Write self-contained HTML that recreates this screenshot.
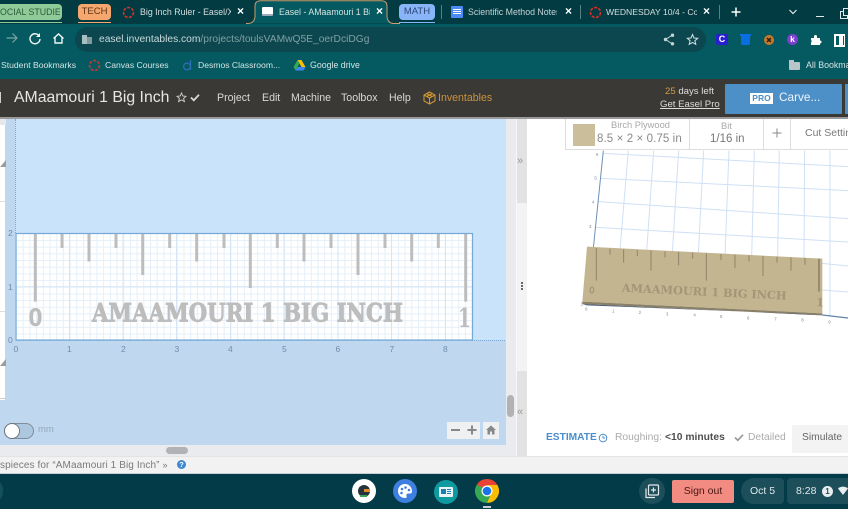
<!DOCTYPE html>
<html><head><meta charset="utf-8">
<style>
html,body{margin:0;padding:0;width:848px;height:509px;overflow:hidden;background:#fff;font-family:"Liberation Sans",sans-serif}
.a{position:absolute;white-space:nowrap}
#root{position:relative;width:848px;height:509px;overflow:hidden}
</style></head><body><div id="root">

<!-- tab strip -->
<div class="a" style="left:0;top:0;width:848px;height:24px;background:#033b42"></div>
<div class="a" style="left:0;top:24px;width:848px;height:55px;background:#045a60"></div>
<div class="a" style="left:-10px;top:4px;width:72px;height:16px;border-radius:4px;background:#8fcb98"></div>
<div class="a" style="left:0;top:22px;width:62px;height:1px;background:#8fcb98"></div>
<div class="a" style="left:0;top:5px;width:60px;font-size:8.8px;line-height:14px;color:#2c5a3a;overflow:hidden">OCIAL STUDIES</div>
<div class="a" style="left:78px;top:4px;width:33px;height:16px;border-radius:4px;background:#f5a76e;color:#5c3418;font-size:9.5px;line-height:15px;text-align:center">TECH</div>
<div class="a" style="left:78px;top:22px;width:33px;height:1px;background:#f5a76e"></div>
<svg class="a" style="left:122px;top:6px" width="13" height="13"><circle cx="6.5" cy="6.5" r="5" fill="none" stroke="#d8312b" stroke-width="1.6" stroke-dasharray="3 1.4"/></svg>
<div class="a" style="left:140px;top:5px;width:91px;overflow:hidden;font-size:8.8px;line-height:14px;color:#d5dfe0">Big Inch Ruler - Easel/X</div>
<div class="a" style="left:237px;top:4px;font-size:12px;line-height:15px;color:#fff;font-weight:bold">×</div>

<svg class="a" style="left:246px;top:0" width="154" height="24"><path d="M0 23.5 H2 Q8 23.5 9 17 V6 Q9 .7 15 .7 H135 Q141 .7 141 6 V17 Q142 23.5 148 23.5 H154" fill="#045a60" stroke="#c79c6e" stroke-width="1"/></svg>
<div class="a" style="left:262px;top:7px;width:11px;height:7px;background:#fff;border-radius:1px;border-bottom:2px solid #9ab"></div>
<div class="a" style="left:279px;top:5px;width:91px;overflow:hidden;font-size:8.8px;line-height:14px;color:#d5e2e3">Easel - AMaamouri 1 Big</div>
<div class="a" style="left:376px;top:4px;font-size:12px;line-height:15px;color:#fff;font-weight:bold">×</div>

<div class="a" style="left:399px;top:4px;width:36px;height:16px;border-radius:4px;background:#8ab4f8;color:#2d4778;font-size:9.5px;line-height:15px;text-align:center">MATH</div>
<div class="a" style="left:399px;top:22px;width:36px;height:1px;background:#8ab4f8"></div>
<div class="a" style="left:441px;top:5px;width:1px;height:14px;background:#5b7f84"></div>
<div class="a" style="left:451px;top:6px;width:12px;height:12px;background:#4c8bf5;border-radius:1px"></div>
<div class="a" style="left:453px;top:9px;width:8px;height:1px;background:#fff;box-shadow:0 2px 0 #fff,0 4px 0 #fff"></div>
<div class="a" style="left:468px;top:5px;width:89px;overflow:hidden;font-size:8.8px;line-height:14px;color:#c5d4d6">Scientific Method Notes</div>
<div class="a" style="left:565px;top:4px;font-size:12px;line-height:15px;color:#fff;font-weight:bold">×</div>
<div class="a" style="left:580px;top:5px;width:1px;height:14px;background:#5b7f84"></div>
<svg class="a" style="left:589px;top:6px" width="13" height="13"><circle cx="6.5" cy="6.5" r="5" fill="none" stroke="#d8312b" stroke-width="1.6" stroke-dasharray="3 1.4"/></svg>
<div class="a" style="left:606px;top:5px;width:91px;overflow:hidden;font-size:8.6px;line-height:14px;color:#d5dfe0">WEDNESDAY 10/4 - Cod</div>
<div class="a" style="left:703px;top:4px;font-size:12px;line-height:15px;color:#fff;font-weight:bold">×</div>
<div class="a" style="left:719px;top:5px;width:1px;height:14px;background:#5b7f84"></div>
<svg class="a" style="left:730px;top:6px" width="12" height="12"><path d="M6 1.5V10.5M1.5 6H10.5" stroke="#fff" stroke-width="1.5"/></svg>
<svg class="a" style="left:788px;top:8px" width="10" height="8"><path d="M1.5 2 L5 5.5 L8.5 2" fill="none" stroke="#dfe8e8" stroke-width="1.2"/></svg>
<div class="a" style="left:816px;top:16px;width:8px;height:1px;background:#dfe8e8"></div>
<div class="a" style="left:840px;top:11px;width:6px;height:6px;border:1px solid #dfe8e8"></div>
<div class="a" style="left:843px;top:8px;width:6px;height:6px;border:1px solid #dfe8e8;background:#033b42"></div>

<!-- toolbar -->
<svg class="a" style="left:5px;top:31px" width="14" height="14"><path d="M1.5 7H12M7.5 2.5L12 7L7.5 11.5" fill="none" stroke="#7fa3a6" stroke-width="1.2"/></svg>
<svg class="a" style="left:28px;top:32px" width="14" height="14"><path d="M11.3 4.2A5 5 0 1 0 12 7" fill="none" stroke="#f2f6f6" stroke-width="1.4"/><path d="M12 1V5H8Z" fill="#f2f6f6"/></svg>
<svg class="a" style="left:52px;top:32px" width="13" height="13"><path d="M1.5 6.5L6.5 2L11.5 6.5M3 5.5V11H10V5.5" fill="none" stroke="#f2f6f6" stroke-width="1.4"/></svg>
<div class="a" style="left:75px;top:27px;width:631px;height:25px;border-radius:13px;background:#0c474f"></div>
<div class="a" style="left:82px;top:35px;width:5px;height:9px;background:#a9bec0"></div>
<div class="a" style="left:87px;top:37px;width:5px;height:7px;background:#7e9a9d"></div>
<div class="a" style="left:99px;top:32px;font-size:10.25px;line-height:15px;color:#c9dadb">easel.inventables.com<span style="color:#7fa0a3">/projects/toulsVAMwQ5E_oerDciDGg</span></div>
<svg class="a" style="left:663px;top:33px" width="12" height="13"><path d="M9.5 2L2.5 6.5L9.5 11" fill="none" stroke="#c5d5d6" stroke-width="1"/><circle cx="9.5" cy="2.2" r="1.7" fill="#c5d5d6"/><circle cx="2.5" cy="6.5" r="1.7" fill="#c5d5d6"/><circle cx="9.5" cy="10.8" r="1.7" fill="#c5d5d6"/></svg>
<svg class="a" style="left:686px;top:33px" width="13" height="13"><path d="M6.5 1.5L8 5L11.7 5.3L8.9 7.7L9.8 11.3L6.5 9.4L3.2 11.3L4.1 7.7L1.3 5.3L5 5Z" fill="none" stroke="#d5e0e0" stroke-width="1"/></svg>
<div class="a" style="left:716px;top:34px;width:12px;height:11px;background:#2a1fd0;border-radius:2px;color:#fff;font-size:9px;font-weight:bold;line-height:11px;text-align:center">C</div>
<div class="a" style="left:741px;top:36px;width:9px;height:9px;background:#0b6ee0;border-radius:0 0 2px 2px"></div>
<div class="a" style="left:740px;top:34px;width:11px;height:1.5px;background:#0b6ee0"></div>
<div class="a" style="left:764px;top:35px;width:10px;height:10px;border-radius:50%;background:#c8792a"></div>
<svg class="a" style="left:764px;top:35px" width="10" height="10"><path d="M3 3L7 7M7 3L3 7" stroke="#2a1a10" stroke-width="1.5"/></svg>
<div class="a" style="left:787px;top:34px;width:11px;height:11px;border-radius:50%;background:#7c3fd0;color:#fff;font-size:8.5px;font-weight:bold;line-height:11px;text-align:center">k</div>
<svg class="a" style="left:810px;top:34px" width="12" height="12"><path d="M1 4H4V2.5A1.5 1.5 0 0 1 7 2.5V4H10V6.5A1.5 1.5 0 0 1 10 9.5V11H1V8.5A1.5 1.5 0 0 0 1 6Z" fill="#fff"/></svg>
<div class="a" style="left:834px;top:34px;width:8px;height:9px;border:2px solid #fff;border-right-width:1px;background:#045a60"></div>
<div class="a" style="left:839px;top:34px;width:4px;height:11px;background:#fff"></div>

<!-- bookmarks -->
<div class="a" style="left:1px;top:58px;font-size:8.6px;line-height:14px;color:#d5e3e4">Student Bookmarks</div>
<svg class="a" style="left:88px;top:59px" width="13" height="13"><circle cx="6.5" cy="6.5" r="5" fill="none" stroke="#d8312b" stroke-width="1.6" stroke-dasharray="3 1.4"/></svg>
<div class="a" style="left:105px;top:58px;font-size:8.6px;line-height:14px;color:#d5e3e4">Canvas Courses</div>
<svg class="a" style="left:182px;top:59px" width="11" height="13"><circle cx="5" cy="7.5" r="3.4" fill="none" stroke="#2f6fb5" stroke-width="1.2"/><path d="M8.5 1V11" stroke="#2f6fb5" stroke-width="1.2"/></svg>
<div class="a" style="left:198px;top:58px;font-size:8.6px;line-height:14px;color:#d5e3e4">Desmos Classroom...</div>
<svg class="a" style="left:293px;top:59px" width="13" height="12"><path d="M4.5 1H8.5L12.5 8H8.5Z" fill="#fbbc04"/><path d="M4.5 1L.5 8L2.5 11.5L6.5 4.5Z" fill="#34a853"/><path d="M2.5 11.5H10.5L12.5 8H4.5Z" fill="#4285f4"/></svg>
<div class="a" style="left:310px;top:58px;font-size:8.8px;line-height:14px;color:#d5e3e4">Google drive</div>
<div class="a" style="left:789px;top:62px;width:11px;height:8px;background:#b8c6c8;border-radius:1px"></div>
<div class="a" style="left:789px;top:60px;width:5px;height:3px;background:#b8c6c8"></div>
<div class="a" style="left:806px;top:58px;font-size:8.8px;line-height:14px;color:#d5e3e4">All Bookmarks</div>

<!-- app header -->
<div class="a" style="left:0;top:79px;width:848px;height:39px;background:#3b3936"></div>
<div class="a" style="left:0;top:117px;width:848px;height:2px;background:#9a9a9a"></div>
<div class="a" style="left:0;top:92px;width:1px;height:11px;background:#cfcfcf"></div>
<div class="a" style="left:14px;top:87px;font-size:15.8px;line-height:21px;color:#e6e6e6">AMaamouri 1 Big Inch</div>
<svg class="a" style="left:176px;top:92px" width="11" height="11"><path d="M5.5 1L6.8 4L10 4.3L7.6 6.4L8.4 9.6L5.5 7.9L2.6 9.6L3.4 6.4L1 4.3L4.2 4Z" fill="none" stroke="#d5d5d5" stroke-width=".9"/></svg>
<svg class="a" style="left:190px;top:93px" width="10" height="9"><path d="M1 4.5L3.8 7.3L9 1.8" fill="none" stroke="#d8d8d8" stroke-width="1.8"/></svg>
<div class="a" style="left:217px;top:91px;font-size:10.6px;line-height:14px;color:#d8d8d8">Project</div>
<div class="a" style="left:262px;top:91px;font-size:10.6px;line-height:14px;color:#d8d8d8">Edit</div>
<div class="a" style="left:291px;top:91px;font-size:10.6px;line-height:14px;color:#d8d8d8">Machine</div>
<div class="a" style="left:341px;top:91px;font-size:10.6px;line-height:14px;color:#d8d8d8">Toolbox</div>
<div class="a" style="left:389px;top:91px;font-size:10.6px;line-height:14px;color:#d8d8d8">Help</div>
<svg class="a" style="left:423px;top:91px" width="13" height="14"><path d="M6.5 1L12 4V10L6.5 13L1 10V4ZM1 4L6.5 7L12 4M6.5 7V13M3.700 2.500L9.300 5.500M9.300 2.500L3.700 5.500" fill="none" stroke="#d59a35" stroke-width="1"/></svg>
<div class="a" style="left:438px;top:91px;font-size:10.6px;line-height:14px;color:#c8933c">Inventables</div>
<div class="a" style="left:665px;top:85px;font-size:9.6px;line-height:13px;color:#ddd"><span style="color:#d09a45">25</span> days left</div>
<div class="a" style="left:660px;top:98px;font-size:9.6px;line-height:14px;color:#ddd;text-decoration:underline">Get Easel Pro</div>
<div class="a" style="left:725px;top:84px;width:117px;height:30px;background:#4d8fc7;border-radius:1px"></div>
<div class="a" style="left:750px;top:93px;width:23px;height:11px;background:#fff;color:#4d8fc7;font-size:8.5px;font-weight:bold;line-height:11px;text-align:center">PRO</div>
<div class="a" style="left:779px;top:89px;font-size:11.8px;line-height:16px;color:#eef4fa">Carve...</div>
<div class="a" style="left:845px;top:84px;width:3px;height:30px;background:#4d8fc7"></div>

<!-- canvas -->
<div class="a" style="left:0;top:119px;width:506px;height:221px;background:#c9e3fb"></div>
<div class="a" style="left:0;top:340px;width:506px;height:105px;background:#bfd8f0"></div>
<div class="a" style="left:5px;top:119px;width:10px;height:326px;background:#bfd8f0"></div>
<div class="a" style="left:0;top:119px;width:5px;height:281px;background:#fff"></div>
<div class="a" style="left:0;top:119px;width:6px;height:6px;background:#e6e8ea"></div>
<div class="a" style="left:0;top:201px;width:5px;height:1px;background:#ddd"></div>
<div class="a" style="left:0;top:311px;width:5px;height:1px;background:#ddd"></div>
<div class="a" style="left:0;top:398px;width:5px;height:1px;background:#ccc"></div>
<svg class="a" style="left:0;top:160px" width="6" height="8"><path d="M6 0V7H0Z" fill="#9c9c9c"/></svg>
<svg class="a" style="left:0;top:359px" width="6" height="8"><path d="M6 0V7H0Z" fill="#9c9c9c"/></svg>
<div class="a" style="left:15px;top:119px;width:0;height:114px;border-left:1px dotted #7aa9d6"></div>
<div class="a" style="left:472px;top:340px;width:33px;height:0;border-top:1px dotted #7aa9d6"></div>
<svg class="a" style="left:0;top:225px" width="506" height="140" font-family="Liberation Sans, sans-serif">
<defs>
<pattern id="m" x="16" y="8.300" width="6.700" height="6.680" patternUnits="userSpaceOnUse"><path d="M.5 0V6.680M0 .5H6.700" stroke="#e5eff9" stroke-width="1" fill="none"/></pattern>
</defs>
<rect x="16" y="8.500" width="456.500" height="106.500" fill="#fff"/>
<rect x="16" y="8.500" width="456.500" height="106.500" fill="url(#m)"/>
<path d="M69.500 9V115M123 9V115M176.500 9V115M230.500 9V115M284 9V115M338 9V115M391.500 9V115M445.500 9V115M16 61.800H472" stroke="#d6e5f5" stroke-width="1"/>
<g fill="#bdbdbd">
<rect x="33.800" y="8" width="3" height="68.600"/><rect x="60.500" y="8" width="3" height="15"/><rect x="87.500" y="8" width="3" height="28.500"/><rect x="114.500" y="8" width="3" height="15"/><rect x="141.200" y="8" width="3" height="42"/><rect x="168.200" y="8" width="3" height="15"/><rect x="195.200" y="8" width="3" height="28.500"/><rect x="222.500" y="8" width="3" height="15"/><rect x="248.800" y="8" width="3" height="55"/><rect x="275.800" y="8" width="3" height="15"/><rect x="302.500" y="8" width="3" height="28.500"/><rect x="329.500" y="8" width="3" height="15"/><rect x="356.500" y="8" width="3" height="42"/><rect x="383.500" y="8" width="3" height="15"/><rect x="410.200" y="8" width="3" height="28.500"/><rect x="436.800" y="8" width="3" height="15"/><rect x="464.200" y="8" width="3" height="68.600"/>
</g>
<text x="92" y="96.500" font-family="DejaVu Serif, serif" font-weight="bold" font-size="25" fill="#bdbdbd" stroke="#bdbdbd" stroke-width=".9" textLength="311" lengthAdjust="spacingAndGlyphs">AMAAMOURI 1 BIG INCH</text>
<text x="28.500" y="101" font-family="Liberation Sans, sans-serif" font-weight="bold" font-size="25" fill="#bdbdbd" stroke="#bdbdbd" stroke-width=".4">0</text>
<text x="458" y="102" font-family="DejaVu Serif, serif" font-weight="bold" font-size="26" fill="#bdbdbd" textLength="13" lengthAdjust="spacingAndGlyphs">1</text>
<rect x="16" y="8.500" width="456.500" height="106.500" fill="none" stroke="#74a9d8" stroke-width="1.200"/>
<rect x="16" y="114.500" width="456.500" height="1.200" fill="#74a9d8"/>
<g font-size="8.500" fill="#6f8ca8">
<text x="8" y="11">2</text><text x="8" y="65">1</text><text x="8" y="118">0</text>
<text x="13.500" y="127">0</text><text x="67" y="127">1</text><text x="121" y="127">2</text><text x="174.500" y="127">3</text><text x="228" y="127">4</text><text x="282" y="127">5</text><text x="335.500" y="127">6</text><text x="389.500" y="127">7</text><text x="443" y="127">8</text>
</g>
</svg>

<!-- toggle -->
<div class="a" style="left:4px;top:423px;width:28px;height:14px;border:1px solid #7f8d9a;border-radius:8px;background:#adc7df"></div>
<div class="a" style="left:4px;top:423px;width:14px;height:14px;border:1px solid #6d7780;border-radius:50%;background:#fff"></div>
<div class="a" style="left:38px;top:423px;font-size:9.500px;line-height:13px;color:#95a5b4">mm</div>

<!-- zoom controls -->
<div class="a" style="left:447px;top:422px;width:33px;height:17px;background:#eef0f2"></div>
<div class="a" style="left:483px;top:422px;width:16px;height:17px;background:#eef0f2"></div>
<div class="a" style="left:451px;top:429px;width:9px;height:2px;background:#888"></div>
<svg class="a" style="left:467px;top:425px" width="10" height="10"><path d="M5 .5V9.500M.5 5H9.500" stroke="#888" stroke-width="2"/></svg>
<svg class="a" style="left:486px;top:425px" width="10" height="10"><path d="M5 .5L10 5H8.500V9.500H6V6.500H4V9.500H1.500V5H0Z" fill="#888"/></svg>

<!-- scroll track -->
<div class="a" style="left:506px;top:119px;width:10px;height:337px;background:#eaebee"></div>
<div class="a" style="left:507px;top:395px;width:7px;height:22px;background:#b1b2b4;border-radius:4px"></div>
<div class="a" style="left:0;top:445px;width:516px;height:11px;background:#eaebee"></div>
<div class="a" style="left:166px;top:447px;width:22px;height:7px;background:#b1b2b4;border-radius:4px"></div>
<!-- collapse bar -->
<div class="a" style="left:516px;top:119px;width:1px;height:337px;background:#f8f8f8"></div>
<div class="a" style="left:517px;top:119px;width:10px;height:84px;background:#e2e2e2"></div>
<div class="a" style="left:517px;top:203px;width:10px;height:168px;background:#f3f3f3"></div>
<div class="a" style="left:517px;top:371px;width:10px;height:85px;background:#e2e2e2"></div>
<div class="a" style="left:517px;top:155px;font-size:11px;line-height:12px;color:#999">»</div>
<div class="a" style="left:517px;top:406px;font-size:11px;line-height:12px;color:#999">«</div>
<div class="a" style="left:520.500px;top:282px;width:2px;height:2px;background:#666;box-shadow:0 3px 0 #666,0 6px 0 #666"></div>

<!-- bottom bar -->
<div class="a" style="left:0;top:456px;width:848px;height:17px;background:#f2f2f2;border-top:1px solid #e3e3e3;box-sizing:border-box"></div>
<div class="a" style="left:0;top:458px;font-size:10px;line-height:14px;color:#7a7a7a;letter-spacing:.1px">spieces for “AMaamouri 1 Big Inch” <span style="font-size:9px">»</span></div>
<div class="a" style="left:177px;top:460px;width:9px;height:9px;border-radius:50%;background:#3f88cf;color:#fff;font-size:7.500px;font-weight:bold;line-height:9px;text-align:center">?</div>

<!-- right panel -->
<div class="a" style="left:527px;top:119px;width:321px;height:337px;background:#fff"></div>
<svg class="a" style="left:510px;top:120px" width="338" height="210" font-family="Liberation Sans, sans-serif">
<g transform="scale(.3333)" fill="none" stroke="#cfe0f5" stroke-width="3">
<path d="M355 92L330 390M431 92L410 395M506 92L487 400M581 92L565 405M657 92L645 410M733 92L725 415M808 92L803 420M884 92L882 425M960 92L960 590"/>
<path d="M280 100L1014 140M272 175L1014 212M265 245L1014 296M258 322L1014 366M937 430L1014 438M937 510L1014 516"/>
<path d="M280 92L250 385" stroke="#6f8fb5" stroke-width="3"/>
<path d="M937 585L1014 594" stroke="#5f84a8" stroke-width="4"/>
</g>
<g transform="scale(.3333)">
<path d="M231 380L937 416L937 580L217 545Z" fill="#c3b58f"/>
<path d="M217 545L937 580L937 586L217 552Z" fill="#8a8068"/>
<path d="M217 552L937 586L880 582L230 556Z" fill="#4a5a70"/>
<g stroke="#8f8468" stroke-width="3">
<path d="M259 384V482M300 386V404M341 388V428M382 390V408M423 392V452M465 394V412M506 396V436M548 398V416M589 400V482M633 402V420M675 404V444M717 406V424M759 408V468M801 410V428M843 412V452M885 414V434"/>
<path d="M927 416V515" stroke-width="5"/>
</g>
<text x="0" y="0" transform="translate(335 515) rotate(2.800)" font-family="DejaVu Serif, serif" font-weight="bold" font-size="34" fill="#a29678" textLength="495" lengthAdjust="spacingAndGlyphs">AMAAMOURI 1 BIG INCH</text>
<text transform="translate(237 520) rotate(2.800)" font-family="Liberation Sans, sans-serif" font-weight="bold" font-size="30" fill="#a29678">0</text>
<text transform="translate(918 558) rotate(2.800)" font-family="DejaVu Serif, serif" font-weight="bold" font-size="34" fill="#a29678">1</text>
<g font-size="13" fill="#7b8795">
<text x="258" y="108">6</text><text x="253" y="178">5</text><text x="246" y="250">4</text><text x="237" y="324">3</text><text x="212" y="556">1</text>
<text x="225" y="572">0</text><text x="306" y="578">1</text><text x="386" y="582">2</text><text x="468" y="586">3</text><text x="550" y="590">4</text><text x="630" y="594">5</text><text x="711" y="598">6</text><text x="793" y="602">7</text><text x="874" y="604">8</text><text x="955" y="610">9</text>
</g>
</g>
</svg>

<!-- material bar -->
<div class="a" style="left:565px;top:119px;width:283px;height:31px;background:#fff;border-left:1px solid #ddd;border-bottom:1px solid #ddd;box-sizing:border-box"></div>
<div class="a" style="left:573px;top:124px;width:22px;height:22px;background:#cbbf9b"></div>
<div class="a" style="left:689px;top:119px;width:1px;height:31px;background:#ddd"></div>
<div class="a" style="left:763px;top:119px;width:1px;height:31px;background:#ddd"></div>
<div class="a" style="left:790px;top:119px;width:1px;height:31px;background:#ddd"></div>
<div class="a" style="left:611px;top:119px;font-size:9.300px;line-height:12px;color:#a8a8a8">Birch Plywood</div>
<div class="a" style="left:597px;top:131px;font-size:11.500px;line-height:16px;color:#8a8a8a;letter-spacing:.1px">8.5 × 2 × 0.75 in</div>
<div class="a" style="left:721px;top:120px;font-size:9.300px;line-height:12px;color:#a8a8a8">Bit</div>
<div class="a" style="left:710px;top:131px;font-size:11.500px;line-height:16px;color:#777">1/16 in</div>
<svg class="a" style="left:771px;top:127px" width="12" height="12"><path d="M6 1.500V10.500M1.500 6H10.500" stroke="#888" stroke-width="1"/></svg>
<div class="a" style="left:805px;top:126px;font-size:10.500px;line-height:14px;color:#777">Cut Settings</div>

<!-- estimate -->
<div class="a" style="left:546px;top:431px;font-size:10.200px;line-height:14px;font-weight:bold;color:#4a8ecb">ESTIMATE</div>
<svg class="a" style="left:598px;top:433px" width="10" height="10"><circle cx="5" cy="5" r="3.800" fill="none" stroke="#4a8ecb" stroke-width="1"/><path d="M5 2.800V5H7" fill="none" stroke="#4a8ecb" stroke-width=".9"/></svg>
<div class="a" style="left:615px;top:431px;font-size:10.300px;line-height:14px;color:#aaa">Roughing:</div>
<div class="a" style="left:665px;top:431px;font-size:10.300px;line-height:14px;font-weight:bold;color:#4f4f4f">&lt;10 minutes</div>
<svg class="a" style="left:734px;top:433px" width="10" height="9"><path d="M1 4.500L3.800 7.300L9 1.800" fill="none" stroke="#999" stroke-width="1.700"/></svg>
<div class="a" style="left:748px;top:431px;font-size:10.300px;line-height:14px;color:#aaa">Detailed</div>
<div class="a" style="left:792px;top:425px;width:56px;height:28px;background:#f3f3f3;border-radius:2px"></div>
<div class="a" style="left:802px;top:431px;font-size:10.300px;line-height:14px;color:#666">Simulate</div>

<!-- shelf -->
<div class="a" style="left:0;top:473px;width:848px;height:36px;background:#033c48;border-top:1px solid #c8cfd2;box-sizing:border-box"></div>
<div class="a" style="left:-10px;top:481px;width:13px;height:20px;border-radius:50%;background:#14505a"></div>
<div class="a" style="left:352px;top:479px;width:24px;height:24px;border-radius:50%;background:#fff"></div>
<div class="a" style="left:358px;top:485px;width:12px;height:12px;border-radius:50%;background:#27323a"></div>
<div class="a" style="left:364px;top:489px;width:6px;height:3px;background:#e08a2c"></div>
<div class="a" style="left:360px;top:495px;width:7px;height:2px;background:#3aa35a"></div>
<div class="a" style="left:393px;top:479px;width:24px;height:24px;border-radius:50%;background:#3f7fe0"></div>
<svg class="a" style="left:393px;top:479px" width="24" height="24"><path d="M12 5C7.500 5 5 8.500 5 12C5 16 8 19 12 19C13.500 19 14 18 13.500 17C13 15.500 14 14.500 15.500 14.500H17C18.500 14.500 19 13.500 19 12C19 8 15.500 5 12 5Z" fill="#fff"/><circle cx="9" cy="10" r="1.300" fill="#3f7fe0"/><circle cx="12.500" cy="8.500" r="1.300" fill="#3f7fe0"/><circle cx="16" cy="11" r="1.300" fill="#3f7fe0"/><circle cx="8.500" cy="14" r="1.300" fill="#3f7fe0"/></svg>
<div class="a" style="left:434px;top:480px;width:24px;height:24px;border-radius:50%;background:#0e9aa0"></div>
<div class="a" style="left:439px;top:487px;width:14px;height:10px;background:#e8f4f6;border-radius:1px"></div>
<div class="a" style="left:441px;top:489px;width:5px;height:5px;background:#1b7fb0"></div>
<div class="a" style="left:447px;top:489px;width:4px;height:1px;background:#1b7fb0;box-shadow:0 2px 0 #1b7fb0,0 4px 0 #1b7fb0"></div>
<svg class="a" style="left:475px;top:479px" width="24" height="24"><path d="M12 12L1.600 6A12 12 0 0 1 22.400 6Z" fill="#ea4335"/><path d="M1.600 6A12 12 0 0 0 12 24L17 12Z" fill="#34a853"/><path d="M22.400 6H12L17 12L12 24A12 12 0 0 0 22.400 6Z" fill="#fbbc04"/><circle cx="12" cy="12" r="5.500" fill="#fff"/><circle cx="12" cy="12" r="4.300" fill="#1a73e8"/></svg>
<div class="a" style="left:483px;top:506px;width:8px;height:1.500px;background:#c5d0d2"></div>
<div class="a" style="left:639px;top:478px;width:26px;height:26px;border-radius:50%;background:#1d4f5b"></div>
<svg class="a" style="left:645px;top:484px" width="15" height="15"><path d="M1 4.500V13.500H10" fill="none" stroke="#e3eaeb" stroke-width="1.200"/><rect x="3.500" y="1" width="10" height="10" rx="1" fill="none" stroke="#e3eaeb" stroke-width="1.200"/><path d="M8.500 3.500V8.500M6 6H11" stroke="#e3eaeb" stroke-width="1.200"/></svg>
<div class="a" style="left:672px;top:480px;width:62px;height:23px;background:#f28b82;border-radius:2px;color:#4a1815;font-size:10.500px;line-height:23px;text-align:center">Sign out</div>
<div class="a" style="left:741px;top:478px;width:43px;height:26px;background:#1d4f5b;border-radius:13px 4px 4px 13px;color:#dfe7e8;font-size:10.500px;line-height:26px;text-align:center">Oct 5</div>
<div class="a" style="left:787px;top:478px;width:70px;height:26px;background:#1d4f5b;border-radius:4px"></div>
<div class="a" style="left:796px;top:484px;font-size:10.500px;line-height:14px;color:#dfe7e8">8:28</div>
<div class="a" style="left:822px;top:486px;width:11px;height:11px;border-radius:50%;background:#e8eeee;color:#1d4f5b;font-size:8px;font-weight:bold;line-height:11px;text-align:center">1</div>
<svg class="a" style="left:838px;top:486px" width="10" height="10"><path d="M0 2.500C3 0 7 0 10 2.500L5 9Z" fill="#e8eeee"/></svg>

</div></body></html>
